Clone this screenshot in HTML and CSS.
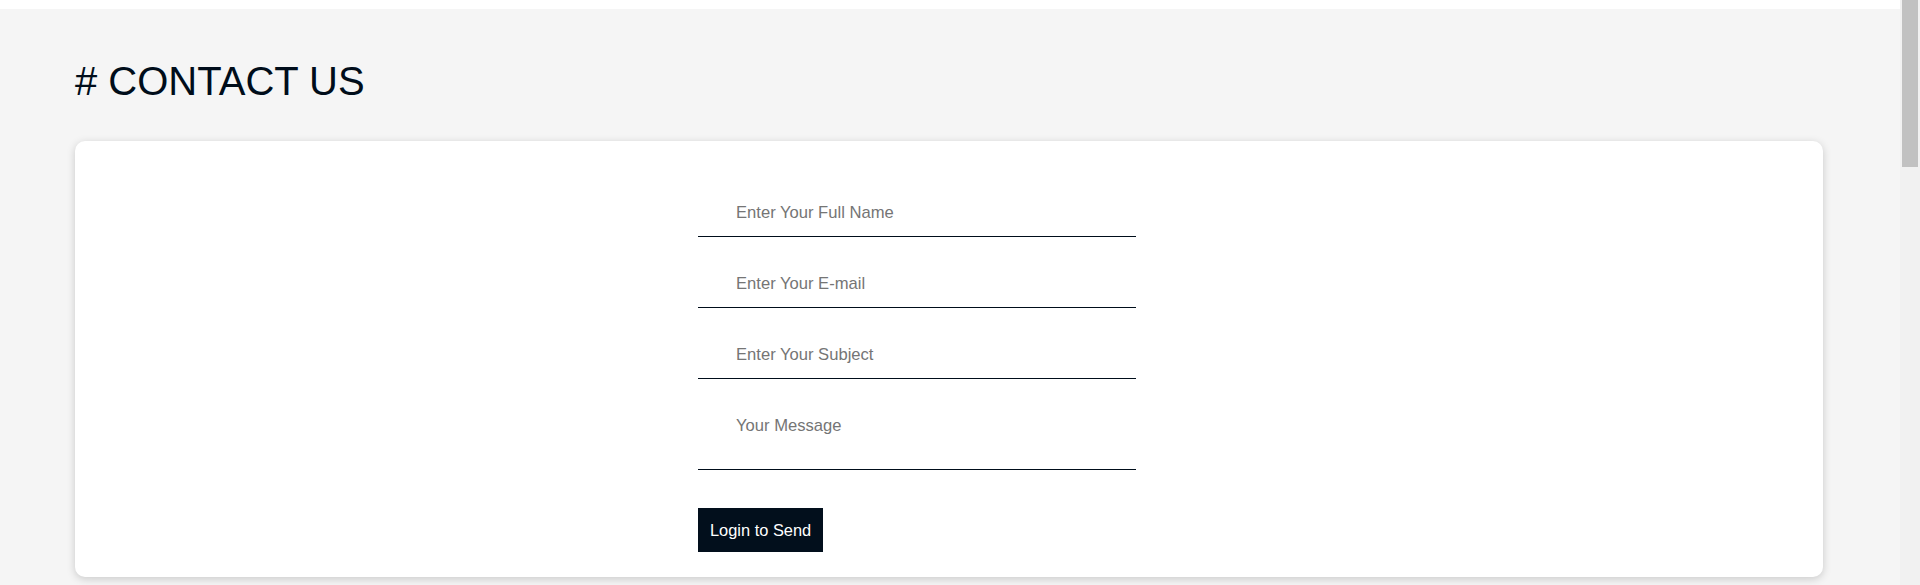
FILE: index.html
```html
<!DOCTYPE html>
<html lang="en">
<head>
<meta charset="utf-8">
<title>Contact Us</title>
<link rel="stylesheet" href="styles.css">
</head>
<body>
<div class="topbar"></div>
<main class="page">
  <h1 class="title"># CONTACT US</h1>
  <section class="card">
    <form class="contact-form">
      <input class="field" type="text" placeholder="Enter Your Full Name">
      <input class="field" type="email" placeholder="Enter Your E-mail">
      <input class="field" type="text" placeholder="Enter Your Subject">
      <textarea class="field field-message" placeholder="Your Message"></textarea>
      <button class="send-btn" type="button">Login to Send</button>
    </form>
  </section>
</main>
<div class="scrollbar"><div class="scrollbar-thumb"></div></div>
</body>
</html>
```
FILE: styles.css
```css
html, body {
  margin: 0;
  padding: 0;
}
body {
  background: #f5f5f5;
  font-family: "Liberation Sans", Arial, sans-serif;
  color: #000d1a;
  overflow: hidden;
  height: 585px;
}
.topbar {
  height: 9px;
  background: #ffffff;
}
.page {
  width: calc(100% - 17px);
  box-sizing: border-box;
  padding: 0 80px 0 75px;
}
.title {
  margin: 49px 0 37px 0;
  font-size: 40px;
  line-height: 46px;
  font-weight: 400;
  color: #000d1a;
}
.card {
  background: #ffffff;
  border-radius: 10px;
  box-shadow: 0 2px 8px rgba(0, 0, 0, 0.18);
  padding: 48px 0 25px 623px;
}
.contact-form {
  width: 438px;
  display: flex;
  flex-direction: column;
  gap: 23px;
}
.field {
  display: block;
  box-sizing: border-box;
  width: 100%;
  height: 48px;
  margin: 0;
  padding: 15px 14px 14px 38px;
  border: none;
  border-bottom: 1px solid #000d1a;
  border-radius: 0;
  background: transparent;
  font-family: "Liberation Sans", Arial, sans-serif;
  font-size: 16.6px;
  line-height: 18px;
  color: #000d1a;
  outline: none;
}
.field::placeholder {
  color: #757575;
  opacity: 1;
}
.field-message {
  height: 68px;
  resize: none;
  overflow: hidden;
}
.send-btn {
  align-self: flex-start;
  margin-top: 15px;
  height: 44px;
  padding: 0 12px;
  border: none;
  border-radius: 0;
  background: #020f1c;
  color: #ffffff;
  font-family: "Liberation Sans", Arial, sans-serif;
  font-size: 16.4px;
}
.scrollbar {
  position: fixed;
  top: 0;
  right: 0;
  width: 20px;
  height: 100%;
  background: #f1f1f1;
}
.scrollbar-thumb {
  margin: 0 2px;
  height: 167px;
  background: #c1c1c1;
}
```
